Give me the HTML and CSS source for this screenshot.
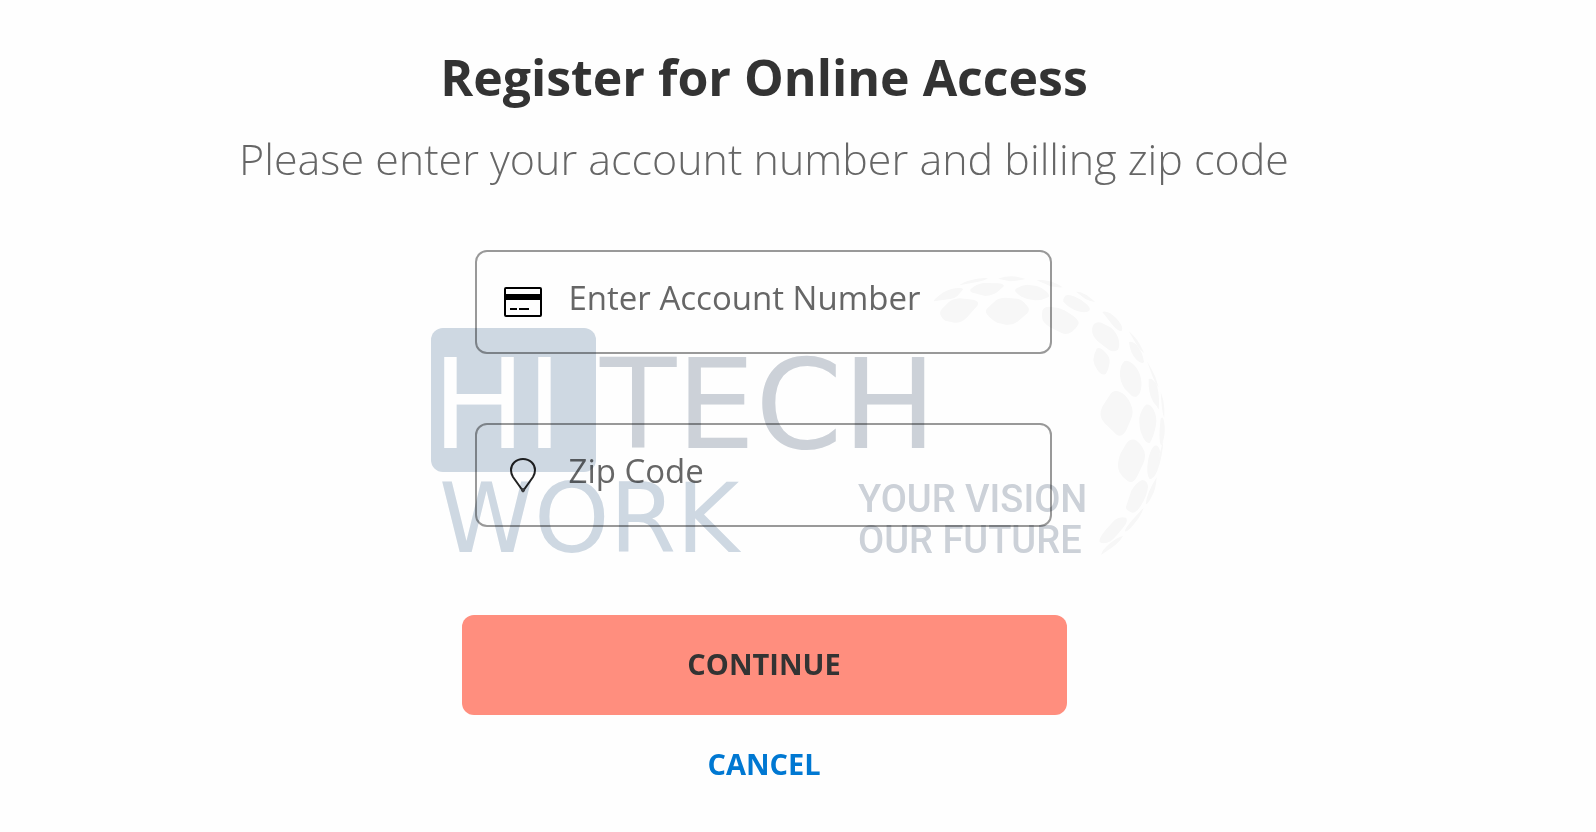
FILE: index.html
```html
<!DOCTYPE html>
<html lang="en">
<head>
<meta charset="utf-8">
<meta name="viewport" content="width=device-width, initial-scale=1">
<title>Register for Online Access</title>
<link rel="stylesheet" href="styles.css">
</head>
<body>
<main class="page">
  <h1 class="title">Register for Online Access</h1>
  <p class="subtitle">Please enter your account number and billing zip code</p>
  <form class="form">
    <div class="fields">
      <div class="field">
        <svg class="field-icon" viewBox="0 0 38 40" aria-hidden="true">
          <rect x="1" y="6" width="36" height="28" rx="1" fill="none" stroke="#000" stroke-width="2"/>
          <path d="M1 12h36v6H1z"/>
          <path d="M6 27h7M15 27h10" stroke="#000" stroke-width="2"/>
        </svg>
        <label class="visually-hidden" for="account">Enter Account Number</label>
        <input class="field-input" id="account" type="text" placeholder="Enter Account Number">
      </div>
      <div class="field">
        <svg class="field-icon" viewBox="0 0 38 40" aria-hidden="true">
          <path d="M19 36L9 22C7 19 7 17 7 15C7 9 12 4 19 4C26 4 31 9 31 15C31 17 31 19 29 22Z" fill="none" stroke="#222" stroke-width="2"/>
          <circle cx="19" cy="35" r="2" fill="#444"/>
        </svg>
        <label class="visually-hidden" for="zip">Zip Code</label>
        <input class="field-input" id="zip" type="text" placeholder="Zip Code">
      </div>
    </div>
    <button class="continue" type="submit">CONTINUE</button>
    <a class="cancel" href="#">CANCEL</a>
    <svg class="watermark" viewBox="431 270 740 290" aria-hidden="true">
      <rect x="431" y="328" width="165" height="144" rx="12" fill="#cfd9e3"/>
      <text class="mark mark-box" x="432" y="448">HI</text>
      <text class="mark mark-grey" x="600" y="448">TECH</text>
      <text class="mark mark-work" x="439" y="552">WORK</text>
      <text class="tagline" x="858" y="512">YOUR VISION</text>
      <text class="tagline" x="858" y="553">OUR FUTURE</text>
      <g class="globe" transform="translate(920 260) scale(.33333)">
        <path d="M42 124Q38 120 68 98Q90 84 120 84Q134 84 126 92L112 108Q105 115 90 117Z"/>
        <path d="M118 76Q130 66 155 60Q190 52 204 55Q195 62 175 65Z"/>
        <path d="M158 98Q144 92 156 84Q170 72 190 69L235 70Q256 73 250 80L232 96Q220 105 196 108Z"/>
        <path d="M234 56Q255 49 275 49Q300 50 316 57Q295 62 270 64Z"/>
        <path d="M63 168Q56 158 66 146L84 128Q98 116 120 115L160 119Q180 124 172 137L140 173Q124 189 104 188L76 182Q68 178 63 168Z"/>
        <path d="M201 163Q194 154 202 145L228 121Q238 113 258 113L292 116Q308 119 320 136Q332 149 322 160L296 182Q280 196 258 194L232 188Q216 182 201 163Z"/>
        <path d="M288 97Q282 90 290 85Q306 74 322 74L350 78Q366 82 380 95Q392 107 384 112Q366 122 345 121L322 117Q302 112 288 97Z"/>
        <path d="M350 61Q365 58 385 63Q410 68 428 82Q410 83 392 79Z"/>
        <path d="M368 181Q364 166 367 152Q372 140 386 140L412 143Q430 146 460 168Q478 182 476 191Q470 204 456 215Q440 226 425 219L402 208Q378 198 368 181Z"/>
        <path d="M430 125Q428 116 436 107Q446 102 465 110Q485 118 502 134Q514 146 507 153Q496 160 475 154Q446 144 430 125Z"/>
        <path d="M468 95Q480 94 500 105L526 126Q510 124 495 116Z"/>
        <path d="M517 218Q514 204 522 192Q532 184 546 189L570 201Q586 212 594 232Q602 258 593 270Q580 278 566 269L540 249Q522 236 517 218Z"/>
        <path d="M547 156Q556 152 570 160Q590 172 604 195Q610 210 603 214Q594 212 580 198Z"/>
        <path d="M520 300Q522 280 530 266Q540 260 555 276Q570 290 569 306Q566 330 557 342Q546 348 532 330Q522 316 520 300Z"/>
        <path d="M600 335Q602 315 613 304Q622 298 642 315Q656 328 662 352Q668 376 660 398Q650 416 636 408L614 386Q598 362 600 335Z"/>
        <path d="M627 246Q636 242 650 255Q668 276 672 306Q666 314 650 300Q630 280 627 246Z"/>
        <path d="M626 213Q648 232 660 254L673 280Q660 270 650 254Z"/>
        <path d="M686 357Q696 352 708 370Q718 392 717 436Q712 444 700 426Q684 400 686 357Z"/>
        <path d="M681 303Q696 330 706 350L716 383Q706 368 698 350Z"/>
        <path d="M548 438L570 404Q580 388 600 396Q620 404 632 432Q644 456 632 480L618 512Q604 534 590 524L554 490Q532 468 548 438Z"/>
        <path d="M658 474Q664 446 678 434Q692 432 700 448Q712 470 708 494Q702 528 690 548Q680 552 670 534Q656 508 658 474Z"/>
        <path d="M705 414Q716 424 717 448Q710 446 705 414Z"/>
        <path d="M722 395Q732 420 733 445L733 474Q726 462 722 395Z"/>
        <path d="M722 476Q730 464 733 490Q738 526 724 558Q714 544 722 476Z"/>
        <path d="M602 580L618 552Q632 532 650 542Q664 552 673 574Q678 592 670 610L652 648Q640 672 624 664Q608 654 598 636Q588 612 602 580Z"/>
        <path d="M684 604Q688 574 702 558Q716 552 720 574Q720 610 702 646Q696 660 688 656Q678 640 684 604Z"/>
        <path d="M730 540Q728 590 712 632Q702 654 698 652Q716 614 720 578Z"/>
        <path d="M634 692Q648 668 666 660Q682 660 684 680Q682 706 662 738Q648 760 636 758Q616 750 618 740Z"/>
        <path d="M710 652Q708 690 694 712Q682 736 677 732Q680 700 710 652Z"/>
        <path d="M560 806L584 780Q598 768 618 773Q624 780 616 794Q590 828 572 844Q550 854 539 846Q534 836 560 806Z"/>
        <path d="M671 743Q664 766 644 790Q622 818 614 814Q616 800 671 743Z"/>
        <path d="M609 828Q598 848 574 864L543 885Q546 870 570 850Q594 830 609 828Z"/>
      </g>
    </svg>
  </form>
</main>
</body>
</html>
```
FILE: styles.css
```css
* {
  box-sizing: border-box;
}

body {
  margin: 0;
  background: #fefefe;
  font-family: "Open Sans", "Noto Sans", sans-serif;
}

.page {
  display: flex;
  flex-direction: column;
  align-items: center;
  padding: 45px 68px 40px 0;
}

.title {
  margin: 0;
  font-size: 50px;
  font-weight: 700;
  line-height: 64px;
  color: #333;
}

.subtitle {
  margin: 22px 0 63px;
  font-size: 43px;
  font-weight: 300;
  line-height: 56px;
  color: #666;
}

.form {
  position: relative;
  display: flex;
  flex-direction: column;
  width: 100%;
  max-width: 605px;
}

.fields {
  display: flex;
  flex-direction: column;
  gap: 69px;
  padding: 0 15px 0 13px;
  margin-bottom: 88px;
}

.field {
  display: flex;
  align-items: center;
  gap: 27px;
  height: 104px;
  padding: 0 27px;
  border: 2px solid #999;
  border-radius: 12px;
}

.field-icon {
  flex: none;
  width: 38px;
  height: 40px;
}

.field-input {
  flex: 1;
  min-width: 0;
  padding: 0 0 8px;
  border: 0;
  outline: 0;
  background: transparent;
  font: 400 33px/48px "Open Sans", "Noto Sans", sans-serif;
  color: #333;
}

.field-input::placeholder {
  color: #666;
  opacity: 1;
}

.continue,
.cancel {
  font: 700 29px/40px "Open Sans", "Noto Sans", sans-serif;
}

.continue {
  height: 100px;
  padding: 0 0 2px;
  margin-bottom: 29px;
  border: 0;
  border-radius: 12px;
  background: #ff8e7e;
  color: #333;
}

.cancel {
  align-self: center;
  color: #0078d2;
  text-decoration: none;
}

.watermark {
  position: absolute;
  top: 20px;
  left: -31px;
  width: 740px;
  height: 290px;
  mix-blend-mode: multiply;
  pointer-events: none;
}

.mark {
  font-family: "DejaVu Sans", sans-serif;
  font-size: 125px;
}

.mark-box {
  fill: #fff;
}

.mark-grey {
  fill: #cdd2d9;
}

.mark-work {
  font-size: 96px;
  fill: #cfd9e3;
}

.tagline {
  font-family: Roboto, sans-serif;
  font-size: 38px;
  font-weight: 500;
  fill: #cdd2d9;
}

.globe {
  fill: #f8f8f8;
}

.visually-hidden {
  position: absolute;
  width: 1px;
  height: 1px;
  overflow: hidden;
  clip-path: inset(50%);
  white-space: nowrap;
}
```
